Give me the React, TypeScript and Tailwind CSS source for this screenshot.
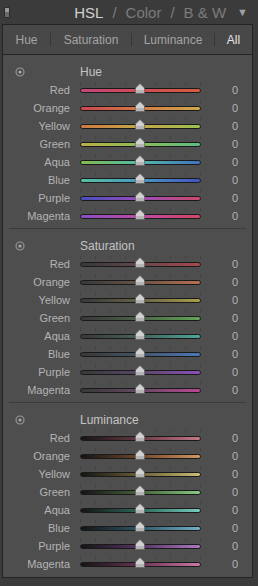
import React from "react";

type Row = { name: string; track: string };

const hueRows: Row[] = [
  { name: "Red", track: "bg-[linear-gradient(to_right,#c4467a,#cf4c56,#d25e40)]" },
  { name: "Orange", track: "bg-[linear-gradient(to_right,#cc4650,#d27a44,#cfa94a)]" },
  { name: "Yellow", track: "bg-[linear-gradient(to_right,#cf7a42,#c4a84a,#9ebe52)]" },
  { name: "Green", track: "bg-[linear-gradient(to_right,#bcae48,#8cbc56,#5ebc88)]" },
  { name: "Aqua", track: "bg-[linear-gradient(to_right,#84bc4c,#52b8a8,#3f72c0)]" },
  { name: "Blue", track: "bg-[linear-gradient(to_right,#56c0a0,#4898c0,#4454c2)]" },
  { name: "Purple", track: "bg-[linear-gradient(to_right,#464ebe,#9a4cb8,#cc4a6c)]" },
  { name: "Magenta", track: "bg-[linear-gradient(to_right,#8a4ec2,#bc4aa4,#d04866)]" },
];

const satRows: Row[] = [
  { name: "Red", track: "bg-[linear-gradient(to_right,#383838,#64484a,#a8484e)]" },
  { name: "Orange", track: "bg-[linear-gradient(to_right,#383838,#6a5248,#b8704e)]" },
  { name: "Yellow", track: "bg-[linear-gradient(to_right,#383838,#666248,#aa9e46)]" },
  { name: "Green", track: "bg-[linear-gradient(to_right,#383838,#4c6448,#62a656)]" },
  { name: "Aqua", track: "bg-[linear-gradient(to_right,#383838,#46625c,#4ca69a)]" },
  { name: "Blue", track: "bg-[linear-gradient(to_right,#383838,#465468,#4878b8)]" },
  { name: "Purple", track: "bg-[linear-gradient(to_right,#383838,#584868,#8c4eb8)]" },
  { name: "Magenta", track: "bg-[linear-gradient(to_right,#383838,#644860,#b84894)]" },
];

const lumRows: Row[] = [
  { name: "Red", track: "bg-[linear-gradient(to_right,#141414,#683a44,#c47888)]" },
  { name: "Orange", track: "bg-[linear-gradient(to_right,#141414,#72462c,#d49660)]" },
  { name: "Yellow", track: "bg-[linear-gradient(to_right,#141414,#6a6036,#cabc78)]" },
  { name: "Green", track: "bg-[linear-gradient(to_right,#141414,#44643a,#88c882)]" },
  { name: "Aqua", track: "bg-[linear-gradient(to_right,#141414,#2e685c,#78ccbc)]" },
  { name: "Blue", track: "bg-[linear-gradient(to_right,#141414,#2e5868,#74b0c8)]" },
  { name: "Purple", track: "bg-[linear-gradient(to_right,#141414,#583466,#ac78c4)]" },
  { name: "Magenta", track: "bg-[linear-gradient(to_right,#141414,#683454,#cc78a4)]" },
];

const ticks = [0, 1, 2, 3, 5, 6, 7, 8];

const Thumb = () => (
  <svg width="10" height="11" viewBox="0 0 10 11" className="absolute left-[55px] top-[-5px]">
    <polygon points="5,0.5 9.5,5 9.5,10.5 0.5,10.5 0.5,5" fill="#d0d0d0" stroke="#555555" strokeWidth="0.6" />
    <polygon points="1,7 9,7 9,10 1,10" fill="#b4b4b4" />
  </svg>
);

const Slider = ({ row }: { row: Row }) => (
  <div className="flex items-center h-[18px]">
    <div className="w-[67px] text-right text-[11px] text-[#b4b4b4] leading-none">{row.name}</div>
    <div className="relative ml-[10px] w-[121px] h-[5px]">
      {ticks.map((t) => (
        <div key={t} className="absolute top-[-6px] w-px h-[3px] bg-[#434343]" style={{ left: t * 15 }} />
      ))}
      <div className={`w-full h-[5px] rounded-full border border-[#1a1a1a] ${row.track}`} />
      <Thumb />
    </div>
    <div className="w-[37px] text-right text-[11px] text-[#b4b4b4] leading-none">0</div>
  </div>
);

const TargetIcon = () => (
  <svg width="10" height="10" viewBox="0 0 10 10">
    <circle cx="5" cy="5" r="4" fill="none" stroke="#9a9a9a" strokeWidth="1.1" />
    <circle cx="5" cy="5" r="1.6" fill="#a8a8a8" />
  </svg>
);

const Section = ({ title, rows, last }: { title: string; rows: Row[]; last?: boolean }) => (
  <div className={`h-[174px] pt-[8px] mx-[6px] ${last ? "" : "border-b border-[#3b3b3b]"}`}>
    <div className="flex items-center h-[18px]">
      <div className="w-[71px] pl-[6px] flex items-center">
        <TargetIcon />
      </div>
      <div className="text-[12px] text-[#c4c4c4] leading-none">{title}</div>
    </div>
    <div className="-ml-[6px]">
      {rows.map((r) => (
        <Slider key={r.name} row={r} />
      ))}
    </div>
  </div>
);

const App = () => {
  return (
    <div className="w-[258px] h-[586px] bg-[#3b3b3b] overflow-hidden" style={{ fontFamily: '"Liberation Sans", Arial, sans-serif' }}>
      {/* header */}
      <div className="h-[24px] flex items-center">
        <div className="ml-[4px] w-[6px] h-[11px] rounded-[1px] bg-[#6a6a6a] border border-[#2a2a2a] flex flex-col">
          <div className="h-[4px] bg-[#9a9a9a]" />
        </div>
        <div className="ml-auto mr-[10px] flex items-center text-[15px] leading-none">
          <span className="text-[#d0d0d0]">HSL</span>
          <span className="text-[#7c7c7c] ml-[9px]">/</span>
          <span className="text-[#7c7c7c] ml-[9px]">Color</span>
          <span className="text-[#7c7c7c] ml-[9px]">/</span>
          <span className="text-[#7c7c7c] ml-[9px]">B &amp; W</span>
          <span className="text-[#a0a0a0] text-[11px] ml-[11px]">▼</span>
        </div>
      </div>

      <div className="ml-[2px] w-[251px] border border-[#232323]">
        {/* tabs */}
        <div className="h-[30px] bg-[#484848] border-b border-[#262626] flex items-center text-[12px] leading-none">
          <div className="w-[47px] text-center text-[#a4a4a4]">Hue</div>
          <div className="w-px h-[13px] bg-[#363636]" />
          <div className="w-[80px] text-center text-[#a4a4a4]">Saturation</div>
          <div className="w-px h-[13px] bg-[#363636]" />
          <div className="w-[82px] text-center text-[#a4a4a4]">Luminance</div>
          <div className="w-px h-[13px] bg-[#363636]" />
          <div className="flex-1 text-center text-[#e6e6e6]">All</div>
        </div>

        {/* body */}
        <div className="bg-[#4e4e4e]">
          <Section title="Hue" rows={hueRows} />
          <Section title="Saturation" rows={satRows} />
          <Section title="Luminance" rows={lumRows} last />
        </div>
      </div>
    </div>
  );
};

export default App;
